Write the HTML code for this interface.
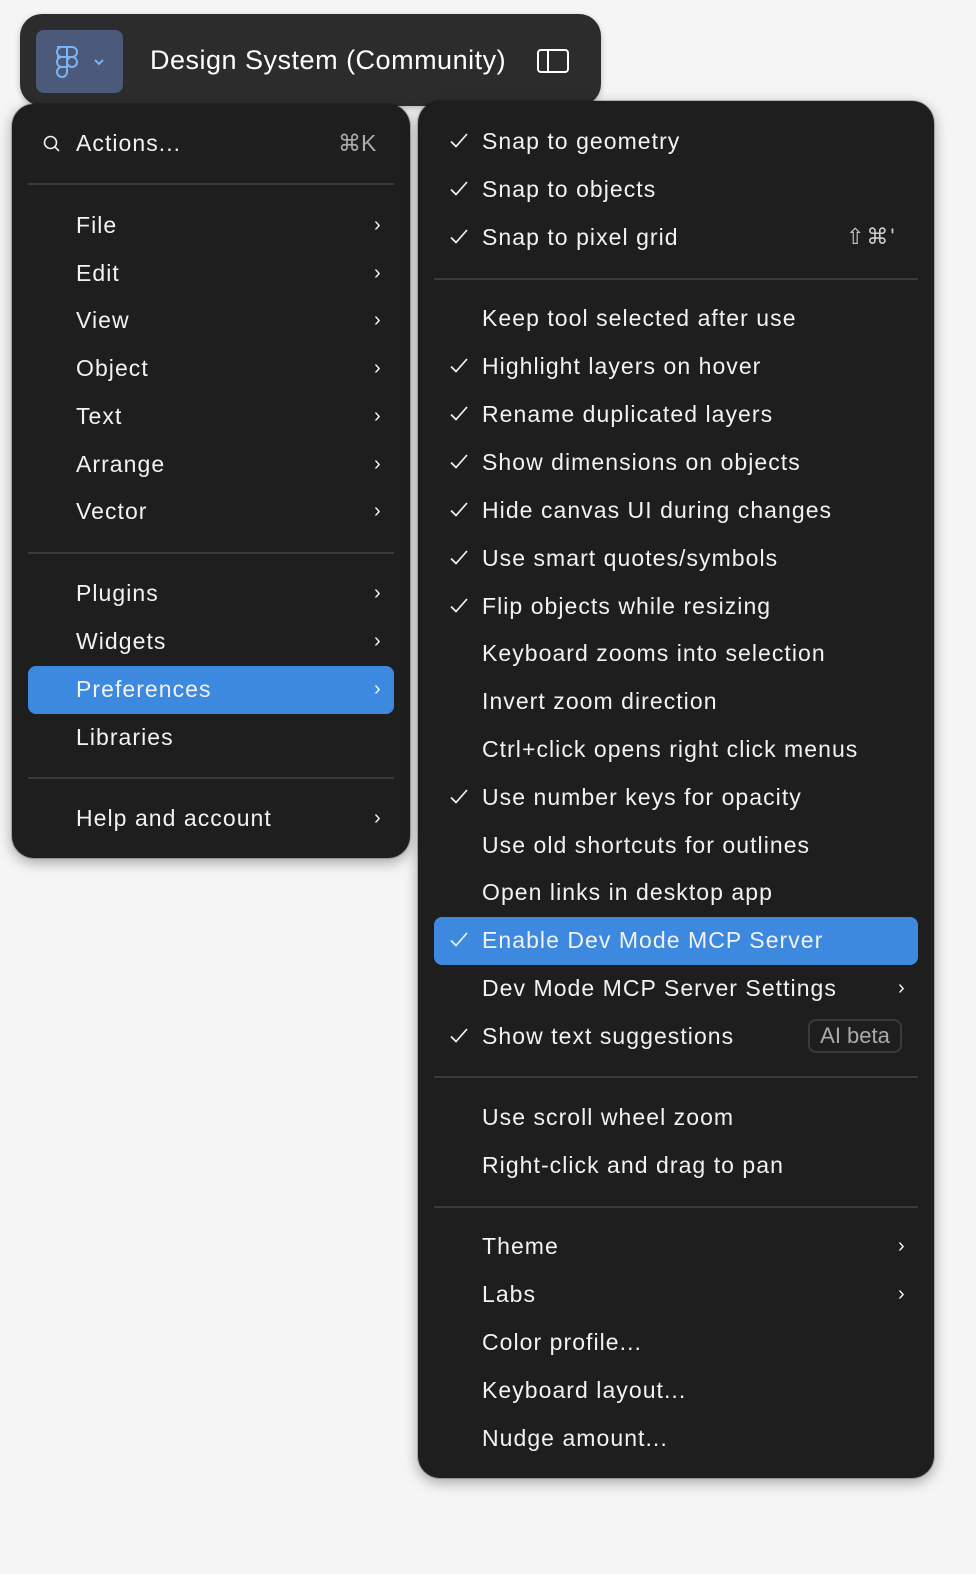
<!DOCTYPE html>
<html><head><meta charset="utf-8"><style>
*{margin:0;padding:0;box-sizing:border-box}
body{width:976px;height:1574px;background:#f5f5f5;position:relative;overflow:hidden;font-family:"Liberation Sans",sans-serif;color:#f2f2f2}
.bar{position:absolute;left:20px;top:14px;width:581px;height:92px;background:#2c2c2c;border-radius:22px;box-shadow:0 2px 6px rgba(0,0,0,.25)}
.logo{position:absolute;left:16px;top:16px;width:87px;height:63px;background:#4b5a7a;border-radius:8px}
.title{position:absolute;left:130px;top:31px;font-size:27px;font-weight:500;color:#fff;letter-spacing:.5px}
.menu{position:absolute;background:#1e1e1e;border-radius:22px;box-shadow:0 4px 14px rgba(0,0,0,.35),0 0 0 1px rgba(0,0,0,.2)}
.it{position:absolute;height:48px;line-height:48px;font-size:23px;letter-spacing:1.05px;white-space:nowrap;z-index:2}
.sep{position:absolute;height:2px;background:#3a3a3a}
.hl{position:absolute;background:#3d89e0;border-radius:8px}
.chev{position:absolute;font-size:20px;line-height:48px;height:48px;z-index:2}
.ck{position:absolute;z-index:2}
</style></head><body>
<div class="bar">
 <div class="logo">
  <svg width="87" height="63" viewBox="0 0 87 63" style="position:absolute;left:0;top:0">
   <g fill="none" stroke="#7cb4f5" stroke-width="2">
    <path d="M21 17h10v10h-5a5 5 0 0 1 0-10z"/>
    <path d="M31 17h5a5 5 0 0 1 0 10h-5z"/>
    <path d="M21 27h10v10h-5a5 5 0 0 1 0-10z"/>
    <circle cx="36" cy="32" r="5"/>
    <path d="M26 37h5v5a5 5 0 1 1-5-5z"/>
   </g>
   <path d="M59 30l4 4 4-4" fill="none" stroke="#7cb4f5" stroke-width="2"/>
  </svg>
 </div>
 <div class="title">Design System (Community)</div>
 <svg width="34" height="26" viewBox="0 0 34 26" style="position:absolute;left:516px;top:34px"><rect x="2" y="2" width="30" height="22" rx="3" fill="none" stroke="#fff" stroke-width="2"/><line x1="12" y1="2" x2="12" y2="24" stroke="#fff" stroke-width="2"/></svg>
</div>

<div class="menu" style="left:12px;top:104px;width:398px;height:754px">
 <svg width="20" height="20" viewBox="0 0 20 20" style="position:absolute;left:30px;top:30px"><circle cx="8.5" cy="8.5" r="6" fill="none" stroke="#eee" stroke-width="1.6"/><line x1="13" y1="13" x2="17" y2="17" stroke="#eee" stroke-width="1.6"/></svg>
 <div class="it" style="left:64px;top:15px">Actions...</div>
 <div class="it" style="left:326px;top:15px;color:#aaa;letter-spacing:0">⌘K</div>
 <div class="sep" style="left:16px;top:79px;width:366px"></div>
 <div class="sep" style="left:16px;top:448px;width:366px"></div>
 <div class="sep" style="left:16px;top:673px;width:366px"></div>
 <div class="hl" style="left:16px;top:562px;width:366px;height:48px"></div>
</div>

<div class="menu" style="left:418px;top:101px;width:516px;height:1377px">
 <div class="sep" style="left:16px;top:177px;width:484px"></div>
 <div class="sep" style="left:16px;top:975px;width:484px"></div>
 <div class="sep" style="left:16px;top:1105px;width:484px"></div>
 <div class="hl" style="left:16px;top:816px;width:484px;height:48px"></div>
 <div style="position:absolute;left:390px;top:918px;width:94px;height:34px;border:2px solid #3a3a3a;border-radius:8px;color:#aaa;font-size:22px;line-height:30px;text-align:center">AI beta</div>
 <div class="it" style="left:428px;top:112px;color:#ccc;font-size:22px;letter-spacing:2px">⇧⌘'</div>
</div>
<div id="L"></div>

<script>
var L=[["File",225,1],["Edit",273,1],["View",320,1],["Object",368,1],["Text",416,1],["Arrange",464,1],["Vector",511,1],["Plugins",593,1],["Widgets",641,1],["Preferences",689,1],["Libraries",737,0],["Help and account",818,1]];
var R=[["Snap to geometry",141,1,0],["Snap to objects",189,1,0],["Snap to pixel grid",237,1,0],["Keep tool selected after use",318,0,0],["Highlight layers on hover",366,1,0],["Rename duplicated layers",414,1,0],["Show dimensions on objects",462,1,0],["Hide canvas UI during changes",510,1,0],["Use smart quotes/symbols",558,1,0],["Flip objects while resizing",606,1,0],["Keyboard zooms into selection",653,0,0],["Invert zoom direction",701,0,0],["Ctrl+click opens right click menus",749,0,0],["Use number keys for opacity",797,1,0],["Use old shortcuts for outlines",845,0,0],["Open links in desktop app",892,0,0],["Enable Dev Mode MCP Server",940,1,0],["Dev Mode MCP Server Settings",988,0,1],["Show text suggestions",1036,1,0],["Use scroll wheel zoom",1117,0,0],["Right-click and drag to pan",1165,0,0],["Theme",1246,0,1],["Labs",1294,0,1],["Color profile...",1342,0,0],["Keyboard layout...",1390,0,0],["Nudge amount...",1438,0,0]];
var h="";
L.forEach(function(a){var t=a[1]-24;h+='<div class="it" style="left:76px;top:'+t+'px">'+a[0]+'</div>';if(a[2])h+='<div class="chev" style="left:374px;top:'+t+'px">›</div>';});
R.forEach(function(a){var t=a[1]-24;h+='<div class="it" style="left:482px;top:'+t+'px">'+a[0]+'</div>';if(a[2])h+='<svg class="ck" width="20" height="20" viewBox="0 0 20 20" style="left:449px;top:'+(a[1]-10)+'px"><path d="M2 10.5l5 5L18 3" fill="none" stroke="#f2f2f2" stroke-width="1.7"/></svg>';if(a[3])h+='<div class="chev" style="left:898px;top:'+t+'px">›</div>';});
document.getElementById("L").outerHTML=h;
</script>
</body></html>
